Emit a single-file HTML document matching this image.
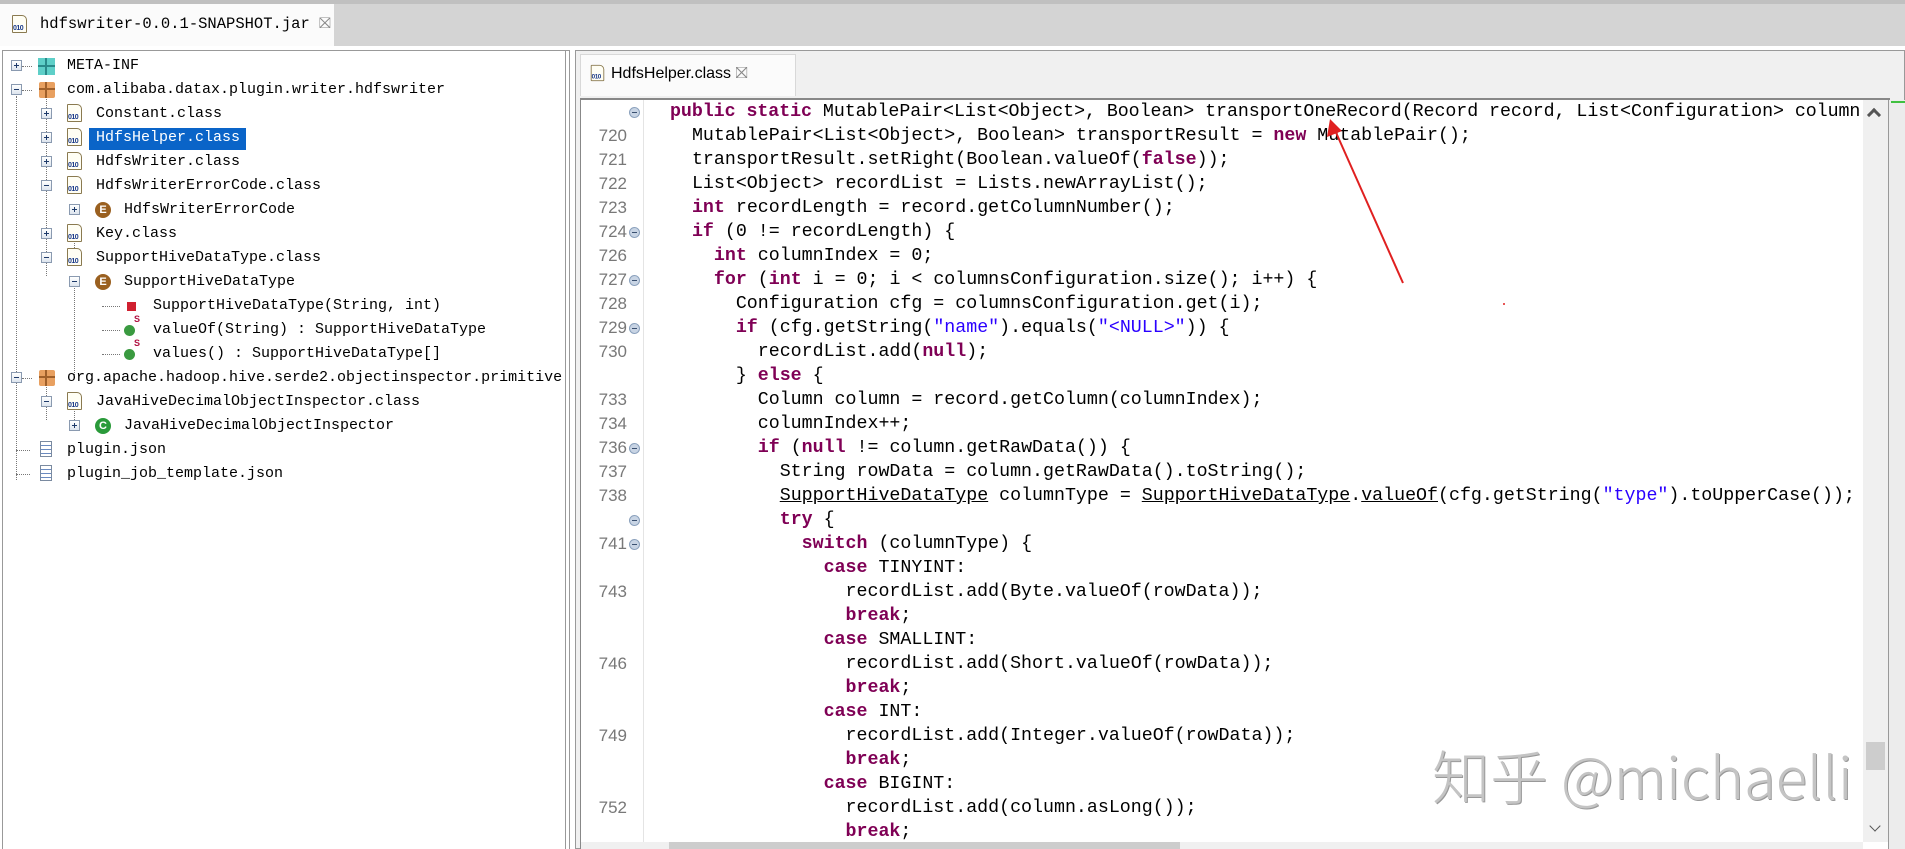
<!DOCTYPE html>
<html><head><meta charset="utf-8"><style>
*{margin:0;padding:0;box-sizing:border-box}
body{width:1905px;height:849px;overflow:hidden;background:#fff;position:relative;font-family:"Liberation Mono","Noto Sans CJK SC",monospace}
.a{position:absolute}
.tr{position:absolute;height:24px;line-height:24px;font-size:15px;color:#000;white-space:pre}
.ex{position:absolute;width:11px;height:11px;border:1px solid #8a9ab0;background:linear-gradient(#fff,#dde4ee)}
.ex:before{content:"";position:absolute;left:2px;top:4px;width:5px;height:1px;background:#1e3a6a}
.ex.p:after{content:"";position:absolute;left:4px;top:2px;width:1px;height:5px;background:#1e3a6a}
.cl{position:absolute;width:15px;height:18px;border:1px solid #8a7a50;background:#fffef4;border-radius:1px 5px 1px 1px}
.cl:after{content:"010";position:absolute;left:0;bottom:0;font:bold 7px "Liberation Sans",sans-serif;color:#1a3a8a;letter-spacing:-0.5px}
.pk{position:absolute;width:16px;height:16px;background:
linear-gradient(90deg,transparent 6px,#a0602a 6px,#a0602a 8px,transparent 8px),
linear-gradient(transparent 6px,#a0602a 6px,#a0602a 8px,transparent 8px),#e8a060;border-radius:2px}
.en{position:absolute;width:16px;height:16px;border-radius:50%;background:#9a6020;color:#fff;font:bold 11px "Liberation Sans",sans-serif;text-align:center;line-height:16px}
.code{position:absolute;left:670px;top:100px;font-size:18.3px;line-height:24px;color:#000}
.code div{height:24px;white-space:pre}
.k{color:#7f0055;font-weight:bold}
.s{color:#2a00ff}
.u{text-decoration:underline}
.ln{position:absolute;left:590px;width:37px;text-align:right;font:17px "Liberation Sans Narrow","Liberation Sans",sans-serif;color:#787878;line-height:24px}
.fd{position:absolute;left:629px;width:11px;height:11px;border-radius:50%;background:#c8d4e4;border:1px solid #8aa0bc}
.fd:after{content:"";position:absolute;left:2px;top:4px;width:5px;height:1px;background:#3a5070}
.dv{position:absolute;border-left:1px dotted #777}
.dh{position:absolute;border-top:1px dotted #777;height:0}
</style></head><body>
<div class="a" style="left:0;top:0;width:1905px;height:4px;background:#c0c0c0"></div>
<div class="a" style="left:0;top:4px;width:1905px;height:42px;background:#d4d4d4"></div>
<div class="a" style="left:0;top:4px;width:334px;height:42px;background:#fbfbfb"></div>
<div class="cl" style="left:12px;top:15px"></div>
<div class="a" style="left:40px;top:12px;font-size:15.5px;line-height:24px;white-space:pre">hdfswriter-0.0.1-SNAPSHOT.jar <span style="color:#888">⛝</span></div>
<div class="a" style="left:0;top:46px;width:1905px;height:5px;background:#fff"></div>

<div class="a" style="left:2px;top:50px;width:568px;height:799px;border:1px solid #999;border-bottom:none;background:#fff"></div>
<div class="a" style="left:565px;top:51px;width:4px;height:798px;border-left:1px solid #999"></div>

<div class="dv" style="left:16px;top:96px;height:384px"></div>
<div class="dv" style="left:46px;top:96px;height:180px"></div>
<div class="dv" style="left:46px;top:384px;height:36px"></div>
<div class="dv" style="left:74px;top:240px;height:24px"></div>
<div class="dv" style="left:74px;top:288px;height:87px"></div>
<div class="dv" style="left:74px;top:408px;height:12px"></div>
<div class="dh" style="left:22px;top:66px;width:10px"></div>
<div class="dh" style="left:22px;top:90px;width:10px"></div>
<div class="dh" style="left:22px;top:378px;width:10px"></div>
<div class="dh" style="left:16px;top:450px;width:14px"></div>
<div class="dh" style="left:16px;top:474px;width:14px"></div>
<div class="dh" style="left:102px;top:306px;width:18px"></div>
<div class="dh" style="left:102px;top:330px;width:18px"></div>
<div class="dh" style="left:102px;top:354px;width:18px"></div>

<div class="ex p" style="left:11px;top:60px"></div>
<div class="a" style="left:38px;top:58px;width:17px;height:17px;background:
linear-gradient(90deg,transparent 7px,#2a8a8a 7px,#2a8a8a 9px,transparent 9px),linear-gradient(transparent 7px,#2a8a8a 7px,#2a8a8a 9px,transparent 9px),#5ecfc8"></div>
<div class="tr" style="left:67px;top:54px">META-INF</div>
<div class="ex" style="left:11px;top:84px"></div>
<div class="pk" style="left:39px;top:82px"></div>
<div class="tr" style="left:67px;top:78px">com.alibaba.datax.plugin.writer.hdfswriter</div>

<div class="ex p" style="left:41px;top:108px"></div><div class="cl" style="left:67px;top:104px"></div><div class="tr" style="left:96px;top:102px">Constant.class</div>
<div class="ex p" style="left:41px;top:132px"></div><div class="cl" style="left:67px;top:128px"></div>
<div class="a" style="left:89px;top:128px;width:157px;height:22px;background:#0a64c8"></div>
<div class="tr" style="left:96px;top:126px;color:#fff">HdfsHelper.class</div>
<div class="ex p" style="left:41px;top:156px"></div><div class="cl" style="left:67px;top:152px"></div><div class="tr" style="left:96px;top:150px">HdfsWriter.class</div>
<div class="ex" style="left:41px;top:180px"></div><div class="cl" style="left:67px;top:176px"></div><div class="tr" style="left:96px;top:174px">HdfsWriterErrorCode.class</div>
<div class="ex p" style="left:69px;top:204px"></div><div class="en" style="left:95px;top:202px">E</div><div class="tr" style="left:124px;top:198px">HdfsWriterErrorCode</div>
<div class="ex p" style="left:41px;top:228px"></div><div class="cl" style="left:67px;top:224px"></div><div class="tr" style="left:96px;top:222px">Key.class</div>
<div class="ex" style="left:41px;top:252px"></div><div class="cl" style="left:67px;top:248px"></div><div class="tr" style="left:96px;top:246px">SupportHiveDataType.class</div>
<div class="ex" style="left:69px;top:276px"></div><div class="en" style="left:95px;top:274px">E</div><div class="tr" style="left:124px;top:270px">SupportHiveDataType</div>
<div class="a" style="left:127px;top:302px;width:9px;height:9px;background:#d02030"></div><div class="tr" style="left:153px;top:294px">SupportHiveDataType(String, int)</div>
<div class="a" style="left:124px;top:325px;width:11px;height:11px;border-radius:50%;background:#3a9a40"></div><div class="a" style="left:134px;top:314px;font:bold 9px 'Liberation Sans';color:#b01040">S</div><div class="tr" style="left:153px;top:318px">valueOf(String) : SupportHiveDataType</div>
<div class="a" style="left:124px;top:349px;width:11px;height:11px;border-radius:50%;background:#3a9a40"></div><div class="a" style="left:134px;top:338px;font:bold 9px 'Liberation Sans';color:#b01040">S</div><div class="tr" style="left:153px;top:342px">values() : SupportHiveDataType[]</div>
<div class="ex" style="left:11px;top:372px"></div><div class="pk" style="left:39px;top:370px"></div><div class="tr" style="left:67px;top:366px">org.apache.hadoop.hive.serde2.objectinspector.primitive</div>
<div class="ex" style="left:41px;top:396px"></div><div class="cl" style="left:67px;top:392px"></div><div class="tr" style="left:96px;top:390px">JavaHiveDecimalObjectInspector.class</div>
<div class="ex p" style="left:69px;top:420px"></div><div class="en" style="left:95px;top:418px;background:#2a9a3a">C</div><div class="tr" style="left:124px;top:414px">JavaHiveDecimalObjectInspector</div>
<div class="a" style="left:40px;top:441px;width:12px;height:16px;border:1px solid #7a8aa0;background:repeating-linear-gradient(#fff 0 3px,#6a8ac0 3px 4px)"></div><div class="tr" style="left:67px;top:438px">plugin.json</div>
<div class="a" style="left:40px;top:465px;width:12px;height:16px;border:1px solid #7a8aa0;background:repeating-linear-gradient(#fff 0 3px,#6a8ac0 3px 4px)"></div><div class="tr" style="left:67px;top:462px">plugin_job_template.json</div>

<div class="a" style="left:575px;top:50px;width:1330px;height:799px;border:1px solid #999;background:#f0f0f0"></div>
<div class="a" style="left:580px;top:54px;width:216px;height:42px;background:#fbfbfb;border:1px solid #d8d8d8;border-bottom:none"></div>
<div class="cl" style="left:590px;top:64px;transform:scale(.9)"></div>
<div class="a" style="left:611px;top:62px;font:16px 'Liberation Sans Narrow','Liberation Sans',sans-serif;line-height:24px;white-space:pre">HdfsHelper.class <span style="color:#888">⛝</span></div>
<div class="a" style="left:580px;top:98px;width:1310px;height:751px;border-top:2px solid #888;border-left:1px solid #888;background:#fff"></div>
<div class="a" style="left:643px;top:100px;width:1px;height:742px;background:#e4e4e4"></div>

<div class="ln" style="top:124px">720</div><div class="ln" style="top:148px">721</div><div class="ln" style="top:172px">722</div><div class="ln" style="top:196px">723</div><div class="ln" style="top:220px">724</div><div class="ln" style="top:244px">726</div><div class="ln" style="top:268px">727</div><div class="ln" style="top:292px">728</div><div class="ln" style="top:316px">729</div><div class="ln" style="top:340px">730</div><div class="ln" style="top:388px">733</div><div class="ln" style="top:412px">734</div><div class="ln" style="top:436px">736</div><div class="ln" style="top:460px">737</div><div class="ln" style="top:484px">738</div><div class="ln" style="top:532px">741</div><div class="ln" style="top:580px">743</div><div class="ln" style="top:652px">746</div><div class="ln" style="top:724px">749</div><div class="ln" style="top:796px">752</div>
<div class="fd" style="top:107px"></div><div class="fd" style="top:227px"></div><div class="fd" style="top:275px"></div><div class="fd" style="top:323px"></div><div class="fd" style="top:443px"></div><div class="fd" style="top:515px"></div><div class="fd" style="top:539px"></div>

<div class="code"><div style="letter-spacing:-0.05px"><span class="k">public</span> <span class="k">static</span> MutablePair&lt;List&lt;Object&gt;, Boolean&gt; transportOneRecord(Record record, List&lt;Configuration&gt; column</div><div>  MutablePair&lt;List&lt;Object&gt;, Boolean&gt; transportResult = <span class="k">new</span> MutablePair();</div><div>  transportResult.setRight(Boolean.valueOf(<span class="k">false</span>));</div><div>  List&lt;Object&gt; recordList = Lists.newArrayList();</div><div>  <span class="k">int</span> recordLength = record.getColumnNumber();</div><div>  <span class="k">if</span> (0 != recordLength) {</div><div>    <span class="k">int</span> columnIndex = 0;</div><div>    <span class="k">for</span> (<span class="k">int</span> i = 0; i &lt; columnsConfiguration.size(); i++) {</div><div>      Configuration cfg = columnsConfiguration.get(i);</div><div>      <span class="k">if</span> (cfg.getString(<span class="s">"name"</span>).equals(<span class="s">"&lt;NULL&gt;"</span>)) {</div><div>        recordList.add(<span class="k">null</span>);</div><div>      } <span class="k">else</span> {</div><div>        Column column = record.getColumn(columnIndex);</div><div>        columnIndex++;</div><div>        <span class="k">if</span> (<span class="k">null</span> != column.getRawData()) {</div><div>          String rowData = column.getRawData().toString();</div><div>          <span class="u">SupportHiveDataType</span> columnType = <span class="u">SupportHiveDataType</span>.<span class="u">valueOf</span>(cfg.getString(<span class="s">"type"</span>).toUpperCase());</div><div>          <span class="k">try</span> {</div><div>            <span class="k">switch</span> (columnType) {</div><div>              <span class="k">case</span> TINYINT:</div><div>                recordList.add(Byte.valueOf(rowData));</div><div>                <span class="k">break</span>;</div><div>              <span class="k">case</span> SMALLINT:</div><div>                recordList.add(Short.valueOf(rowData));</div><div>                <span class="k">break</span>;</div><div>              <span class="k">case</span> INT:</div><div>                recordList.add(Integer.valueOf(rowData));</div><div>                <span class="k">break</span>;</div><div>              <span class="k">case</span> BIGINT:</div><div>                recordList.add(column.asLong());</div><div>                <span class="k">break</span>;</div></div>

<div class="a" style="left:1863px;top:100px;width:25px;height:742px;background:#f0f0f0"></div>
<div class="a" style="left:1869px;top:110px;width:10px;height:10px;border-left:3px solid #555;border-top:3px solid #555;transform:rotate(45deg)"></div>
<div class="a" style="left:1866px;top:742px;width:19px;height:28px;background:#cdcdcd"></div>
<div class="a" style="left:1871px;top:822px;width:8px;height:8px;border-right:1.5px solid #555;border-bottom:1.5px solid #555;transform:rotate(45deg)"></div>
<div class="a" style="left:1888px;top:100px;width:1px;height:749px;background:#999"></div>
<div class="a" style="left:1889px;top:100px;width:16px;height:749px;background:#ececec"></div>
<div class="a" style="left:1891px;top:101px;width:14px;height:2px;background:#40c040"></div>
<div class="a" style="left:581px;top:842px;width:1282px;height:7px;background:#f0f0f0"></div>
<div class="a" style="left:669px;top:842px;width:511px;height:7px;background:#cdcdcd"></div>

<svg class="a" style="left:0;top:0" width="1905" height="849">
<line x1="1403" y1="283" x2="1334" y2="128" stroke="#e02020" stroke-width="2"/>
<polygon points="1330,119 1327,137 1342,131" fill="#e02020"/>
<circle cx="1504" cy="304" r="1" fill="#e02020"/>
</svg>

<div class="a" style="left:1432px;top:738px;font:300 58px 'Noto Sans CJK SC','Liberation Sans',sans-serif;color:#c4c4c4;white-space:pre;line-height:72px;text-shadow:1px 1px 0 #999">知乎 @michaelli</div>
</body></html>
